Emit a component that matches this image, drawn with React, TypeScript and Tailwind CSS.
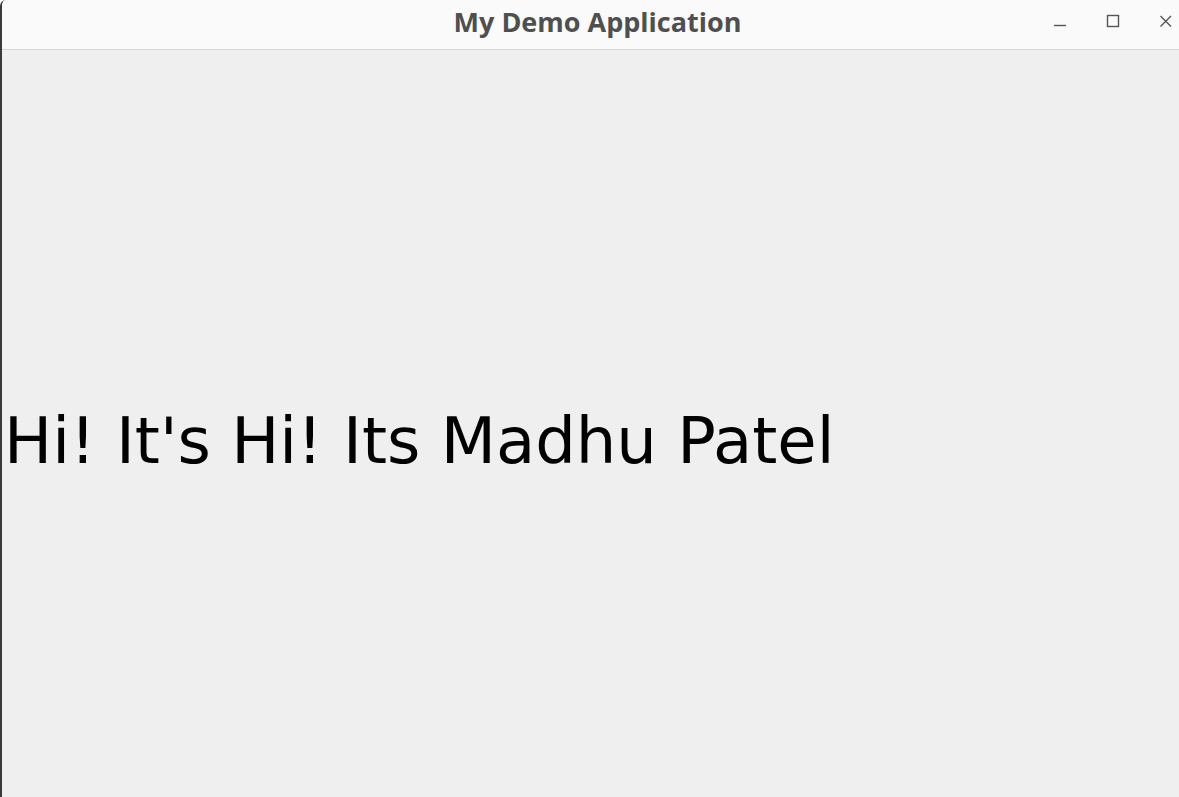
import React from 'react';

const WindowButtons: React.FC = () => (
  <div className="self-start pt-[11px] flex items-center gap-[33px] pr-[3px] text-[#555555]">
    <svg width="20" height="20" viewBox="0 0 20 20">
      <line x1="4" y1="14.5" x2="16" y2="14.5" stroke="currentColor" strokeWidth="1.4" />
    </svg>
    <svg width="20" height="20" viewBox="0 0 20 20">
      <rect x="4.5" y="4.5" width="11" height="11" fill="none" stroke="currentColor" strokeWidth="1.4" />
    </svg>
    <svg width="20" height="20" viewBox="0 0 20 20">
      <path d="M4.5 5 L15 15.5 M15 5 L4.5 15.5" stroke="currentColor" strokeWidth="1.4" />
    </svg>
  </div>
);

export default function App() {
  return (
    <div className="h-[797px] w-[1179px] flex flex-col bg-[#efefef] border-l-2 border-[#3a3a3a] rounded-tl-[6px] overflow-hidden">
      <div className="h-[50px] shrink-0 relative flex items-center justify-end bg-[#fafafa] border-b border-[#d6d6d6]">
        <span
          className="absolute left-0 right-0 top-[4px] text-center text-[27px] leading-[36px] font-bold text-[#4f4f4f] pl-[14px]"
          style={{ fontFamily: '"Open Sans", "DejaVu Sans", sans-serif' }}
        >
          My Demo Application
        </span>
        <WindowButtons />
      </div>
      <div className="flex-1 flex items-center pt-[34px]">
        <p
          className="pl-[2px] text-[64px] leading-none text-black"
          style={{ fontFamily: '"DejaVu Sans", sans-serif' }}
        >
          Hi! It's Hi! Its Madhu Patel
        </p>
      </div>
    </div>
  );
}
